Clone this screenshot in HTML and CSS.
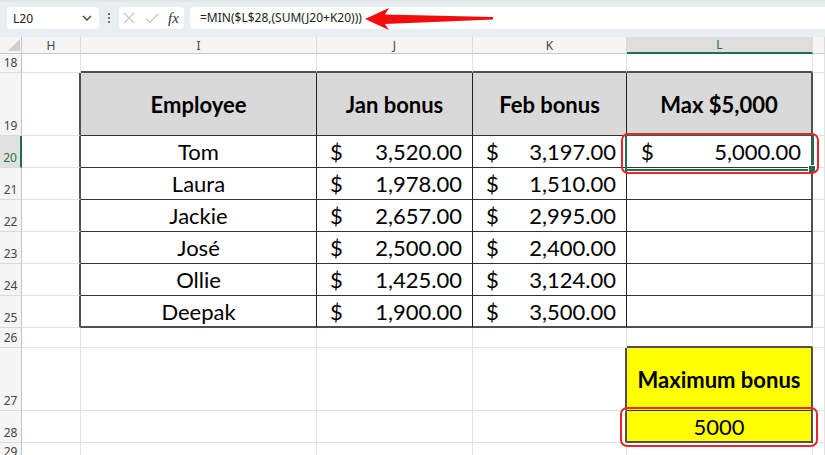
FILE: index.html
```html
<!DOCTYPE html>
<html>
<head>
<meta charset="utf-8">
<link rel="stylesheet" href="styles.css">
</head>
<body>
<div class="app">
  <div class="topbar">
    <div class="namebox"><span>L20</span><svg class="chev" width="10" height="6" viewBox="0 0 10 6"><path d="M1 1 L5 5 L9 1" fill="none" stroke="#444" stroke-width="1.3"/></svg></div>
    <div class="dots"><svg width="4" height="12" viewBox="0 0 4 12"><circle cx="2" cy="2" r="1.1" fill="#555"/><circle cx="2" cy="6" r="1.1" fill="#555"/><circle cx="2" cy="10" r="1.1" fill="#555"/></svg></div>
    <div class="fxbox">
      <svg width="12" height="12" viewBox="0 0 12 12"><path d="M1 1 L11 11 M11 1 L1 11" stroke="#c4c4c4" stroke-width="1.1" fill="none"/></svg>
      <svg width="14" height="11" viewBox="0 0 14 11"><path d="M1 5.5 L5 9.5 L13 1" stroke="#c4c4c4" stroke-width="1.1" fill="none"/></svg>
      <span class="fx">fx</span>
    </div>
    <div class="formula">=MIN($L$28,(SUM(J20+K20)))</div>
  </div>

  <div class="sheet">
    <div class="corner"><svg width="12" height="12" viewBox="0 0 12 12"><polygon points="12,0 12,12 0,12" fill="#cfcfcf"/></svg></div>
    <div class="ch">H</div><div class="ch">I</div><div class="ch">J</div><div class="ch">K</div><div class="ch sel">L</div><div class="ch last"></div>

    <div class="rh">18</div><div class="c"></div><div class="c bt"></div><div class="c bt"></div><div class="c bt"></div><div class="c bt"></div><div class="c"></div>

    <div class="rh">19</div><div class="c bl"></div>
    <div class="t hd">Employee</div><div class="t hd">Jan bonus</div><div class="t hd">Feb bonus</div><div class="t hd tr">Max $5,000</div><div class="c"></div>

    <div class="rh sel">20</div><div class="c bl"></div>
    <div class="t nm">Tom</div><div class="t acc"><span>$</span><span>3,520.00</span></div><div class="t acc"><span>$</span><span>3,197.00</span></div><div class="t acc tr accl"><span>$</span><span>5,000.00</span></div><div class="c"></div>

    <div class="rh">21</div><div class="c bl"></div>
    <div class="t nm">Laura</div><div class="t acc"><span>$</span><span>1,978.00</span></div><div class="t acc"><span>$</span><span>1,510.00</span></div><div class="t tr"></div><div class="c"></div>

    <div class="rh">22</div><div class="c bl"></div>
    <div class="t nm">Jackie</div><div class="t acc"><span>$</span><span>2,657.00</span></div><div class="t acc"><span>$</span><span>2,995.00</span></div><div class="t tr"></div><div class="c"></div>

    <div class="rh">23</div><div class="c bl"></div>
    <div class="t nm">José</div><div class="t acc"><span>$</span><span>2,500.00</span></div><div class="t acc"><span>$</span><span>2,400.00</span></div><div class="t tr"></div><div class="c"></div>

    <div class="rh">24</div><div class="c bl"></div>
    <div class="t nm">Ollie</div><div class="t acc"><span>$</span><span>1,425.00</span></div><div class="t acc"><span>$</span><span>3,124.00</span></div><div class="t tr"></div><div class="c"></div>

    <div class="rh">25</div><div class="c bl"></div>
    <div class="t tb nm">Deepak</div><div class="t tb acc"><span>$</span><span>1,900.00</span></div><div class="t tb acc"><span>$</span><span>3,500.00</span></div><div class="t tb tr"></div><div class="c"></div>

    <div class="rh">26</div><div class="c"></div><div class="c"></div><div class="c"></div><div class="c"></div><div class="c yt"></div><div class="c"></div>

    <div class="rh">27</div><div class="c"></div><div class="c"></div><div class="c"></div><div class="c yl"></div><div class="y hd">Maximum bonus</div><div class="c"></div>

    <div class="rh">28</div><div class="c"></div><div class="c"></div><div class="c"></div><div class="c yl"></div><div class="y yb nm">5000</div><div class="c"></div>

    <div class="rh">29</div><div class="c"></div><div class="c"></div><div class="c"></div><div class="c"></div><div class="c"></div><div class="c"></div>
  </div>

  <div class="cursor"><div class="handle"></div></div>
  <div class="ring ring1"></div>
  <div class="ring ring2"></div>
  <svg class="arrow" width="140" height="30" viewBox="360 5 140 30">
    <polygon points="365,19 389,8 385,14.5 493,17 493,19.5 385,24 389,30" fill="#f20d0d"/>
  </svg>
</div>
</body>
</html>
```

FILE: styles.css
```css
html, body {
  margin: 0;
  padding: 0;
  overflow: hidden;
}
body {
  width: 825px;
  height: 455px;
  font-family: "Noto Sans", "Open Sans", sans-serif;
  background: #fff;
}
.app {
  position: relative;
  width: 825px;
  height: 455px;
  overflow: hidden;
  background: #fff;
}
.topbar {
  height: 37px;
  box-sizing: border-box;
  background: #e9eef1;
  border-top: 2px solid #dfe5e8;
  padding: 5px 0 0 7px;
  display: flex;
  align-items: flex-start;
}
.namebox {
  width: 92px;
  height: 22px;
  box-sizing: border-box;
  background: #fff;
  border-radius: 4px;
  display: flex;
  align-items: center;
  justify-content: space-between;
  padding: 0 7px 0 6px;
  font-size: 12px;
  color: #222;
}
.dots {
  width: 20px;
  height: 22px;
  display: flex;
  align-items: center;
  justify-content: center;
}
.fxbox {
  width: 65px;
  height: 22px;
  box-sizing: border-box;
  background: #fff;
  border-radius: 4px;
  display: flex;
  align-items: center;
  padding-left: 4px;
  gap: 10px;
}
.fx {
  font-family: "Liberation Serif", "DejaVu Serif", serif;
  font-style: italic;
  font-size: 15px;
  color: #333;
  margin-left: -1px;
}
.formula {
  margin-left: 6px;
  flex: 1;
  height: 22px;
  box-sizing: border-box;
  background: #fff;
  border-radius: 4px 0 0 4px;
  padding-left: 10px;
  font-size: 12px;
  line-height: 22px;
  color: #222;
  white-space: nowrap;
}

.sheet {
  display: grid;
  grid-template-columns: 22px 59px 236px 156px 154px 186px 12px;
  grid-template-rows: 17px 19px 63px repeat(6, 32px) 20px 63px 32px 19px;
}
.sheet > div {
  box-sizing: border-box;
  min-width: 0;
}
.corner {
  background: #f5f5f5;
  border-right: 1px solid #c8c8c8;
  border-bottom: 1px solid #c8c8c8;
  display: flex;
  align-items: flex-end;
  justify-content: flex-end;
  padding: 0 1px 2px 0;
}
.ch {
  background: #f5f5f5;
  border-right: 1px solid #dadada;
  border-bottom: 1px solid #c8c8c8;
  font-size: 12px;
  color: #444;
  display: flex;
  align-items: center;
  justify-content: center;
}
.ch.sel {
  background: #dedede;
  border-bottom: 2px solid #1e7145;
  color: #2e6b4a;
}
.rh {
  background: #f5f5f5;
  border-right: 1px solid #c4c4c4;
  border-bottom: 1px solid #dadada;
  font-size: 12px;
  line-height: 14px;
  color: #444;
  display: flex;
  align-items: flex-end;
  justify-content: center;
  padding-bottom: 2px;
}
.rh.sel {
  background: #e1e1e1;
  border-right: 2px solid #1e7145;
  color: #1e7145;
}
.c {
  border-right: 1px solid #e2e2e2;
  border-bottom: 1px solid #e2e2e2;
}
.c.bt { border-bottom: 2px solid #505050; }
.c.bl { border-right: 2px solid #505050; }
.c.yt { border-bottom: 2px solid #505050; }
.c.yl { border-right: 2px solid #505050; }

.t {
  border-right: 1px solid #222;
  border-bottom: 1px solid #333;
  font-family: "Lato", "Noto Sans", sans-serif;
  font-size: 22px;
  color: #000;
}
.t.tr { border-right: 2px solid #505050; }
.t.tb { border-bottom: 2px solid #505050; }

.hd {
  background: #d9d9d9;
  font-family: "Lato", "Noto Sans", sans-serif;
  font-weight: 700;
  font-size: 22px;
  color: #000;
  display: flex;
  align-items: center;
  justify-content: center;
}
.nm {
  display: flex;
  align-items: center;
  justify-content: center;
}
.acc {
  display: flex;
  align-items: center;
  justify-content: space-between;
  padding: 0 10px 0 13px;
}
.acc.accl { padding-left: 14px; }

.y {
  background: #ffff00;
  border-right: 2px solid #505050;
  border-bottom: 1px solid #333;
  font-family: "Lato", "Noto Sans", sans-serif;
  font-size: 22px;
  color: #000;
}
.y.yb { border-bottom: 2px solid #505050; }

.cursor {
  position: absolute;
  left: 625px;
  top: 134px;
  width: 189px;
  height: 37px;
  box-sizing: border-box;
  border: 2px solid #1e7145;
}
.handle {
  position: absolute;
  right: -4px;
  bottom: -4px;
  width: 6px;
  height: 6px;
  background: #1e7145;
  border: 1px solid #fff;
}
.ring {
  position: absolute;
  box-sizing: border-box;
  border: 2px solid #e8262b;
  border-radius: 7px;
}
.ring1 {
  left: 621px;
  top: 133px;
  width: 198px;
  height: 41px;
}
.ring2 {
  left: 620px;
  top: 407px;
  width: 198px;
  height: 40px;
}
.arrow {
  position: absolute;
  left: 360px;
  top: 5px;
}
```
